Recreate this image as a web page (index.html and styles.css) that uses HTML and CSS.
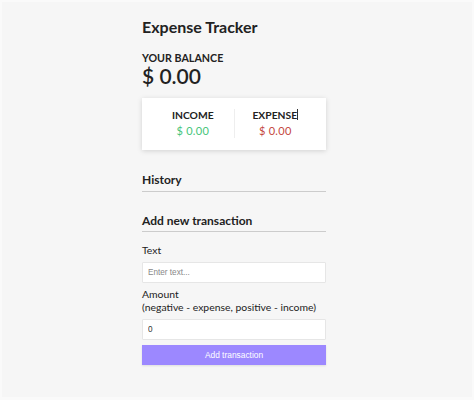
FILE: index.html
```html
<!DOCTYPE html>
<html lang="en">
<head>
<meta charset="utf-8">
<title>Expense Tracker</title>
<link rel="stylesheet" href="styles.css">
</head>
<body>
<div class="page">
  <div class="container">
    <h2 class="title">Expense Tracker</h2>
    <h4 class="balance-label">YOUR BALANCE</h4>
    <h1 class="balance">$ 0.00</h1>
    <div class="inc-exp">
      <div class="col">
        <h4 class="col-label">INCOME</h4>
        <p class="money plus">$ 0.00</p>
      </div>
      <div class="col">
        <h4 class="col-label">EXPENSE<span class="caret"></span></h4>
        <p class="money minus">$ 0.00</p>
      </div>
    </div>
    <h3 class="section">History</h3>
    <ul class="list"></ul>
    <h3 class="section">Add new transaction</h3>
    <form class="form">
      <div class="form-control">
        <label class="label" for="text">Text</label>
        <input class="field" type="text" id="text" placeholder="Enter text...">
      </div>
      <div class="form-control">
        <label class="label" for="amount">Amount <br>(negative - expense, positive - income)</label>
        <input class="field" type="number" id="amount" value="0">
      </div>
      <button class="btn" type="button">Add transaction</button>
    </form>
  </div>
</div>
</body>
</html>
```
FILE: styles.css
```css
* { box-sizing: border-box; }
html, body { margin: 0; height: 100%; }
body {
  background: #fafafa;
  font-family: Lato, "Noto Sans", sans-serif;
  color: #222;
}
.page {
  background: #f6f6f6;
  margin: 2px 2px 3px 2px;
  height: calc(100% - 5px);
  padding: 15px 6px 0 0;
}
.container {
  width: 184px;
  margin: 0 auto;
}
.title {
  font-size: 16px;
  font-weight: 700;
  margin: 0;
  line-height: 20px;
}
.balance-label {
  margin: 15px 0 0;
  font-size: 10.7px;
  font-weight: 700;
  line-height: 12px;
}
.balance {
  margin: 1px 0 0;
  font-size: 21px;
  font-weight: 600;
  line-height: 22px;
}
.inc-exp {
  background: #fff;
  box-shadow: 0 1px 5px rgba(0,0,0,0.15);
  display: flex;
  justify-content: space-between;
  margin: 11px 0 22px;
  padding: 11px 10px 12px;
}
.col {
  flex: 1;
  text-align: center;
}
.col:first-of-type {
  border-right: 1px solid #eee;
}
.col-label {
  margin: 0;
  font-size: 10.3px;
  font-weight: 700;
  line-height: 13px;
}
.caret {
  display: inline-block;
  width: 1px;
  height: 11px;
  background: #333;
  vertical-align: -1px;
}
.money {
  margin: 2px 0 0;
  font-size: 11px;
  line-height: 14px;
  letter-spacing: 0.3px;
}
.plus { color: #45c57a; }
.minus { color: #c44740; }
.section {
  margin: 0;
  font-size: 12px;
  font-weight: 700;
  line-height: 15px;
  border-bottom: 1px solid #ccc;
  padding-bottom: 4px;
}
.list { margin: 0 0 21px; padding: 0; list-style: none; }
.list + .section { padding-bottom: 3px; }
.form { margin: 0; }
.form-control { margin-top: 5px; }
.form-control:first-child { margin-top: 12px; }
.label {
  display: block;
  font-size: 10.4px;
  line-height: 13px;
  margin-bottom: 5px;
  white-space: nowrap;
}
.field {
  display: block;
  width: 100%;
  height: 21px;
  border: 1px solid #e6e6e6;
  border-radius: 1px;
  background: #fff;
  padding: 2px 5px;
  font-family: "Liberation Sans", Arial, sans-serif;
  font-size: 8.2px;
  color: #333;
  outline: none;
}
.field::placeholder { color: #888; }
.btn {
  display: block;
  width: 100%;
  height: 20px;
  margin-top: 5px;
  border: 0;
  background: #9c88ff;
  color: #fff;
  font-family: "Liberation Sans", Arial, sans-serif;
  font-size: 8.4px;
  box-shadow: 0 1px 2px rgba(0,0,0,0.1);
}
```
